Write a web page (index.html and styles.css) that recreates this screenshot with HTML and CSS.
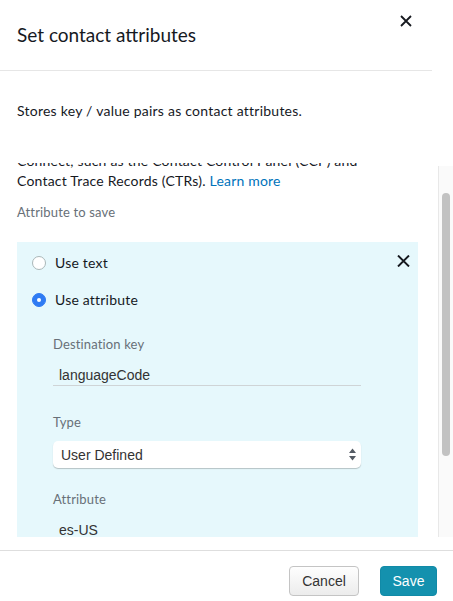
FILE: index.html
```html
<!DOCTYPE html>
<html lang="en">
<head>
<meta charset="utf-8">
<title>Set contact attributes</title>
<link rel="stylesheet" href="styles.css">
</head>
<body>
<div class="panel">
  <header class="header">
    <h1 class="title">Set contact attributes</h1>
    <button class="close" aria-label="Close">
      <svg width="12" height="12" viewBox="0 0 12 12"><path d="M1 1L11 11M11 1L1 11" stroke="#16191f" stroke-width="1.8" fill="none"/></svg>
    </button>
  </header>
  <p class="intro">Stores key / value pairs as contact attributes.</p>
  <div class="scroll">
    <div class="scroll-content">
      <div class="scroll-inner">
        <p class="desc"><span class="line">Connect, such as the Contact Control Panel (CCP) and</span><span class="line">Contact Trace Records (CTRs). <a href="#" class="link">Learn more</a></span></p>
        <div class="section-label">Attribute to save</div>
        <div class="attr-box">
          <div class="attr-top">
            <div class="radios">
              <label class="radio"><span class="dot"></span>Use text</label>
              <label class="radio"><span class="dot checked"></span>Use attribute</label>
            </div>
            <button class="remove" aria-label="Remove">
              <svg width="13" height="12" viewBox="0 0 13 12"><path d="M1 0.5L12 11.5M12 0.5L1 11.5" stroke="#16191f" stroke-width="1.9" fill="none"/></svg>
            </button>
          </div>
          <div class="fields">
            <div class="field-label">Destination key</div>
            <div class="input">languageCode</div>
            <div class="field-label type-label">Type</div>
            <div class="select">
              <span>User Defined</span>
              <svg width="7" height="13" viewBox="0 0 7 13"><path d="M3.5 0.5L7 5H0z M3.5 12.5L7 8H0z" fill="#545b64"/></svg>
            </div>
            <div class="field-label attr-label">Attribute</div>
            <div class="value">es-US</div>
          </div>
        </div>
      </div>
    </div>
    <div class="scrollbar"><div class="thumb"></div></div>
  </div>
  <footer class="footer">
    <button class="btn cancel">Cancel</button>
    <button class="btn save">Save</button>
  </footer>
</div>
</body>
</html>
```
FILE: styles.css
```css
* { box-sizing: border-box; }
html, body { margin: 0; padding: 0; background: #fff; }
body {
  width: 453px;
  height: 601px;
  overflow: hidden;
  font-family: Lato, "Open Sans", sans-serif;
  color: #16191f;
}
.panel {
  display: flex;
  flex-direction: column;
  height: 601px;
}
.header {
  width: 432px;
  height: 71px;
  border-bottom: 1px solid #e6e6e6;
  display: flex;
  justify-content: space-between;
  align-items: flex-start;
  padding: 0 0 0 17px;
}
.title {
  margin: 23px 0 0;
  font-size: 19px;
  line-height: 24px;
  font-weight: 400;
  color: #16191f;
}
.close, .remove {
  border: 0;
  background: none;
  padding: 0;
  margin: 0;
  display: flex;
  cursor: pointer;
}
.close { margin-top: 15px; margin-right: 20px; }
.intro {
  margin: 30px 0 0;
  padding: 0 17px;
  font-size: 14px;
  line-height: 20px;
  letter-spacing: 0.24px;
}
.scroll {
  margin-top: 42px;
  height: 374px;
  display: flex;
}
.scroll-content {
  flex: 1;
  overflow: hidden;
  padding: 0 20px 0 17px;
}
.scroll-inner { margin-top: -12px; }
.desc {
  margin: 0;
  font-size: 14px;
  line-height: 20px;
  letter-spacing: 0.2px;
}
.line { display: block; white-space: nowrap; }
.link { color: #0073bb; text-decoration: none; }
.section-label {
  margin-top: 11px;
  font-size: 13px;
  line-height: 20px;
  color: #687078;
  letter-spacing: 0.15px;
}
.attr-box {
  margin-top: 20px;
  background: #e6f8fc;
  padding: 11px 8px 0 15px;
  height: 400px;
}
.attr-top {
  display: flex;
  justify-content: space-between;
  align-items: flex-start;
}
.radios {
  display: flex;
  flex-direction: column;
  gap: 17px;
}
.remove { margin-top: 2px; }
.radio {
  display: flex;
  align-items: center;
  gap: 9px;
  font-size: 14px;
  line-height: 20px;
  color: #16191f;
  letter-spacing: 0.2px;
}
.dot {
  width: 14px;
  height: 14px;
  border-radius: 50%;
  border: 1px solid #aab7b8;
  background: #fff;
  display: flex;
  align-items: center;
  justify-content: center;
}
.dot.checked {
  border-color: #2f7bf3;
  background: #2f7bf3;
}
.dot.checked::after {
  content: "";
  width: 4px;
  height: 4px;
  border-radius: 50%;
  background: #fff;
}
.fields {
  padding-left: 21px;
  width: 329px;
  margin-top: 24px;
}
.field-label {
  font-size: 13px;
  line-height: 20px;
  color: #687078;
  letter-spacing: 0.15px;
}
.input {
  margin-top: 11px;
  font-family: "Liberation Sans", Arial, sans-serif;
  font-size: 14px;
  line-height: 20px;
  padding: 0 6px;
  border-bottom: 1px solid #cfd4d6;
  color: #333;
}
.type-label { margin-top: 26px; }
.select {
  margin-top: 9px;
  height: 27px;
  background: #fff;
  border-radius: 5px;
  box-shadow: 0 1px 1px rgba(0, 0, 0, 0.22);
  display: flex;
  align-items: center;
  justify-content: space-between;
  padding: 0 5px 0 8px;
  font-family: "Liberation Sans", Arial, sans-serif;
  font-size: 14px;
  color: #333;
}
.attr-label { margin-top: 21px; }
.value {
  margin-top: 11px;
  padding: 0 6px;
  font-family: "Liberation Sans", Arial, sans-serif;
  font-size: 14px;
  line-height: 20px;
  color: #333;
}
.scrollbar {
  width: 15px;
  margin-top: 3px;
  background: #fafafa;
  border-left: 1px solid #e8e8e8;
  padding: 27px 3px 0 3px;
}
.thumb {
  width: 8px;
  height: 263px;
  border-radius: 4px;
  background: #c2c2c2;
}
.footer {
  margin-top: 13px;
  border-top: 1px solid #dedede;
  display: flex;
  justify-content: flex-end;
  gap: 21px;
  padding: 15px 16px 0 0;
}
.btn {
  height: 30px;
  border-radius: 4px;
  font-family: "Liberation Sans", Arial, sans-serif;
  font-size: 14px;
  padding: 0;
  cursor: pointer;
}
.cancel {
  width: 70px;
  border: 1px solid #c4c4c4;
  background: linear-gradient(#fefefe, #ececec);
  color: #333;
}
.save {
  width: 57px;
  border: 1px solid #118aa7;
  background: #1491ae;
  color: #fff;
}
```
